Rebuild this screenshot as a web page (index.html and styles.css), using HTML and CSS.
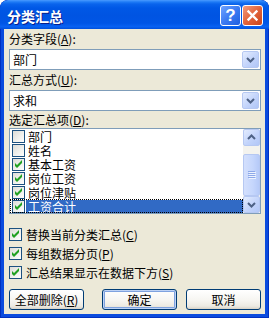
FILE: index.html
```html
<!DOCTYPE html>
<html lang="zh-CN">
<head>
<meta charset="utf-8">
<title>分类汇总</title>
<link rel="stylesheet" href="styles.css">
</head>
<body>
<div class="window">
  <div class="titlebar">
    <span class="title">分类汇总</span>
    <div class="tb-buttons">
      <span class="tb-btn help">?</span>
      <span class="tb-btn close"><svg width="19" height="19" viewBox="0 0 19 19"><path d="M5.5 5.5 L13.5 13.5 M13.5 5.5 L5.5 13.5" stroke="#fff" stroke-width="2.4" stroke-linecap="square"/></svg></span>
    </div>
  </div>
  <div class="client">
    <div class="label">分类字段(<u>A</u>):</div>
    <div class="combo">
      <span class="combo-text">部门</span>
      <span class="drop"><svg width="15" height="15" viewBox="0 0 15 15"><path d="M4 6 L7.5 9.5 L11 6" fill="none" stroke="#4D6185" stroke-width="2"/></svg></span>
    </div>
    <div class="label">汇总方式(<u>U</u>):</div>
    <div class="combo">
      <span class="combo-text">求和</span>
      <span class="drop"><svg width="15" height="15" viewBox="0 0 15 15"><path d="M4 6 L7.5 9.5 L11 6" fill="none" stroke="#4D6185" stroke-width="2"/></svg></span>
    </div>
    <div class="label short">选定汇总项(<u>D</u>):</div>
    <div class="listbox">
      <div class="items">
        <div class="item"><span class="cb"></span><span class="txt">部门</span></div>
        <div class="item"><span class="cb"></span><span class="txt">姓名</span></div>
        <div class="item"><span class="cb checked"><svg width="11" height="11" viewBox="0 0 11 11"><path d="M2 4 L4 6 L9 1 L9 4 L4 9 L2 7 Z" fill="#21A121"/></svg></span><span class="txt">基本工资</span></div>
        <div class="item"><span class="cb checked"><svg width="11" height="11" viewBox="0 0 11 11"><path d="M2 4 L4 6 L9 1 L9 4 L4 9 L2 7 Z" fill="#21A121"/></svg></span><span class="txt">岗位工资</span></div>
        <div class="item"><span class="cb checked"><svg width="11" height="11" viewBox="0 0 11 11"><path d="M2 4 L4 6 L9 1 L9 4 L4 9 L2 7 Z" fill="#21A121"/></svg></span><span class="txt">岗位津贴</span></div>
        <div class="item selected"><span class="cb checked"><svg width="11" height="11" viewBox="0 0 11 11"><path d="M2 4 L4 6 L9 1 L9 4 L4 9 L2 7 Z" fill="#21A121"/></svg></span><span class="txt">工资合计</span></div>
      </div>
      <div class="vscroll">
        <span class="sb-btn"><svg width="15" height="15" viewBox="0 0 15 15"><path d="M4 9 L7.5 5.5 L11 9" fill="none" stroke="#4D6185" stroke-width="2"/></svg></span>
        <span class="track">
          <span class="thumb"><svg width="8" height="8" viewBox="0 0 8 8"><path d="M0 0.5 H7 M0 2.5 H7 M0 4.5 H7 M0 6.5 H7" stroke="#8EA9E9" stroke-width="1"/><path d="M1 1.5 H8 M1 3.5 H8 M1 5.5 H8 M1 7.5 H8" stroke="#EEF4FE" stroke-width="1"/></svg></span>
        </span>
        <span class="sb-btn"><svg width="15" height="15" viewBox="0 0 15 15"><path d="M4 6 L7.5 9.5 L11 6" fill="none" stroke="#4D6185" stroke-width="2"/></svg></span>
      </div>
    </div>
    <div class="options">
      <div class="opt"><span class="cb checked"><svg width="11" height="11" viewBox="0 0 11 11"><path d="M2 4 L4 6 L9 1 L9 4 L4 9 L2 7 Z" fill="#21A121"/></svg></span><span>替换当前分类汇总(<u>C</u>)</span></div>
      <div class="opt"><span class="cb checked"><svg width="11" height="11" viewBox="0 0 11 11"><path d="M2 4 L4 6 L9 1 L9 4 L4 9 L2 7 Z" fill="#21A121"/></svg></span><span>每组数据分页(<u>P</u>)</span></div>
      <div class="opt"><span class="cb checked"><svg width="11" height="11" viewBox="0 0 11 11"><path d="M2 4 L4 6 L9 1 L9 4 L4 9 L2 7 Z" fill="#21A121"/></svg></span><span>汇总结果显示在数据下方(<u>S</u>)</span></div>
    </div>
    <div class="buttons">
      <button class="btn">全部删除(<u>R</u>)</button>
      <button class="btn default ok">确定</button>
      <button class="btn cancel">取消</button>
    </div>
  </div>
</div>
</body>
</html>
```
FILE: styles.css
```css
* { box-sizing: border-box; }
html, body { margin: 0; padding: 0; background: #ffffff; }
body {
  font-family: "Noto Sans CJK SC", "Noto Sans", sans-serif;
  font-size: 12px;
  color: #000;
}
u { text-decoration: underline; text-underline-offset: 1px; }

.window {
  width: 269px;
  height: 318px;
  display: flex;
  flex-direction: column;
  background: #0A4BDE;
  border-radius: 8px 8px 0 0;
  box-shadow: inset 0 0 0 1px #0030C0;
  overflow: hidden;
}

.titlebar {
  flex: none;
  height: 29px;
  display: flex;
  align-items: center;
  padding: 0 6px 0 7px;
  border-radius: 8px 8px 0 0;
  background: linear-gradient(#4A9BFF 0, #1E7BF6 2px, #0A64EC 4px, #0058E6 8px, #0054E2 55%, #0056E6 80%, #0962F2 92%, #0050DC 100%);
}
.title {
  flex: 1;
  color: #fff;
  font-weight: bold;
  font-size: 14px;
  line-height: 16px;
  padding-top: 2px;
  text-shadow: 1px 1px 0 #0A1E8C;
}
.tb-buttons { display: flex; gap: 1px; margin-top: 2px; }
.tb-btn {
  width: 21px;
  height: 21px;
  border: 1px solid #fff;
  border-radius: 3px;
  display: flex;
  align-items: center;
  justify-content: center;
}
.help {
  background: linear-gradient(135deg, #6FA3FF, #3C7BF2 50%, #1F5EE0);
  color: #fff;
  font-family: "Liberation Sans", Arial, sans-serif;
  font-weight: bold;
  font-size: 17px;
  line-height: 19px;
}
.close {
  background: linear-gradient(135deg, #F29C7E, #E2643C 50%, #C9441A);
}

.client {
  flex: 1;
  margin: 0 4px 4px;
  background: #ECE9D8;
  padding: 0 4px 0 5px;
  display: flex;
  flex-direction: column;
}

.label {
  height: 20px;
  padding-top: 2px;
  line-height: 16px;
}
.label.short { height: 17px; padding-top: 1px; }

.combo {
  height: 21px;
  border: 1px solid #7F9DB9;
  background: #fff;
  display: flex;
  align-items: center;
  padding: 1px;
}
.combo-text { flex: 1; padding-left: 2px; line-height: 17px; }
.drop {
  width: 17px;
  height: 17px;
  border: 1px solid #B6C8F2;
  border-radius: 2px;
  background: linear-gradient(135deg, #E3ECFE, #C3D4FB 55%, #AFC5F6);
  display: flex;
  align-items: center;
  justify-content: center;
}

.listbox {
  height: 86px;
  border: 1px solid #7F9DB9;
  background: #fff;
  display: flex;
}
.items { flex: 1; display: flex; flex-direction: column; }
.item {
  height: 14px;
  display: flex;
  align-items: center;
  padding-left: 2px;
}
.item .txt {
  flex: 1;
  margin-left: 1px;
  padding-left: 2px;
  height: 13px;
  line-height: 13px;
}
.item.selected {
  outline: 1px dotted #000;
  outline-offset: -1px;
}
.item.selected .txt { background: #316AC5; color: #fff; }

.cb {
  flex: none;
  width: 13px;
  height: 13px;
  border: 1px solid #1C5180;
  background: linear-gradient(135deg, #DCDCD7, #F5F5F2 70%, #FFFFFF);
  display: flex;
  align-items: center;
  justify-content: center;
}

.vscroll {
  width: 17px;
  display: flex;
  flex-direction: column;
  background: #F4F3EE;
}
.sb-btn {
  height: 17px;
  border: 1px solid #B6C8F2;
  border-radius: 2px;
  background: linear-gradient(135deg, #E3ECFE, #C3D4FB 55%, #B2C7F7);
  display: flex;
  align-items: center;
  justify-content: center;
}
.track {
  flex: 1;
  display: flex;
  flex-direction: column;
  justify-content: flex-end;
}
.thumb {
  height: 42px;
  border: 1px solid #B6C8F2;
  border-radius: 2px;
  background: linear-gradient(to right, #D4E0FD, #C5D6FC 60%, #B6CAF8);
  display: flex;
  align-items: center;
  justify-content: center;
}

.options {
  margin-top: 11px;
  display: flex;
  flex-direction: column;
}
.opt {
  height: 19px;
  display: flex;
  align-items: center;
  gap: 4px;
  line-height: 16px;
}

.buttons {
  margin-top: 7px;
  display: flex;
}
.btn {
  width: 75px;
  height: 21px;
  padding: 0;
  font-family: inherit;
  font-size: 12px;
  color: #000;
  border: 1px solid #003C74;
  border-radius: 3px;
  background: linear-gradient(#FFFFFF, #F6F5F1 55%, #ECEAE2 85%, #D8D2C6);
  line-height: 17px;
}
.btn.default {
  box-shadow: inset 0 0 0 1px #BDD2F5, inset 0 0 0 2px #7FA2DF;
}
.ok { margin-left: 18px; }
.cancel { margin-left: 9px; }
```
